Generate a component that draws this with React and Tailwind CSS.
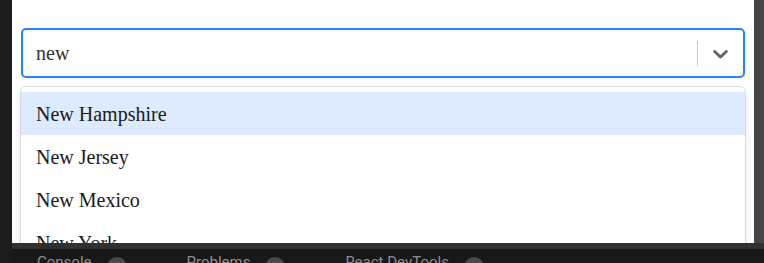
import React from "react";

function Chevron() {
  return (
    <svg viewBox="0 0 20 20" width="25" height="25" aria-hidden="true">
      <path
        fill="#666666"
        d="M4.516 7.548c0.436-0.446 1.043-0.481 1.576 0l3.908 3.747 3.908-3.747c0.533-0.481 1.141-0.446 1.574 0 0.436 0.445 0.408 1.197 0 1.615-0.406 0.418-4.695 4.502-4.695 4.502-0.217 0.223-0.502 0.335-0.787 0.335s-0.57-0.112-0.789-0.335c0 0-4.287-4.084-4.695-4.502s-0.436-1.17 0-1.615z"
      />
    </svg>
  );
}

function Tab({ label }) {
  return (
    <div className="flex items-start">
      <span className="text-[15px] leading-[18px] text-[#8e8e8e]">{label}</span>
      <span className="ml-[15px] mt-[4px] flex h-[20px] w-[20px] items-center justify-center rounded-full bg-[#4a4a4a] text-[11px] leading-none text-[#cfcfcf]">
        0
      </span>
    </div>
  );
}

export default function App() {
  const options = ["New Hampshire", "New Jersey", "New Mexico", "New York"];
  return (
    <div
      className="flex h-[263px] w-[764px] overflow-hidden bg-[#181818]"
      style={{ fontFamily: "Roboto, 'Liberation Sans', sans-serif" }}
    >
      <div className="w-[12px] shrink-0 bg-[#1c1c1c]" />
      <div className="flex flex-1 flex-col">
        <div className="flex h-[243px] shrink-0">
          <div
            className="flex-1 overflow-hidden bg-white px-[9px] pt-[28px]"
            style={{ fontFamily: "'Liberation Serif', 'Times New Roman', serif" }}
          >
            <div className="flex h-[50px] items-center rounded-[5px] border-2 border-[#2684ff] bg-white">
              <div className="flex-1 pl-[13px] text-[20px] text-[#333333]">new</div>
              <div className="flex h-full items-center">
                <div className="h-[25px] w-px bg-[#cccccc]" />
                <div className="flex items-center px-[10px]">
                  <Chevron />
                </div>
              </div>
            </div>
            <div className="mt-[9px] rounded-[5px] bg-white pt-[5px] shadow-[0_0_0_1px_rgba(0,0,0,0.1),0_4px_11px_rgba(0,0,0,0.1)]">
              {options.map((o, i) => (
                <div
                  key={o}
                  className={`flex h-[43px] items-center px-[15px] text-[20px] text-[#1a1a1a] ${
                    i === 0 ? "bg-[#deebff]" : "bg-white"
                  }`}
                >
                  {o}
                </div>
              ))}
            </div>
          </div>
          <div className="w-[10px] shrink-0 bg-[#454545]" />
        </div>
        <div className="h-[6px] shrink-0 bg-[#303030]" />
        <div className="flex flex-1 gap-[60px] pl-[25px] pt-[4px]">
          <Tab label="Console" />
          <Tab label="Problems" />
          <Tab label="React DevTools" />
        </div>
      </div>
    </div>
  );
}
